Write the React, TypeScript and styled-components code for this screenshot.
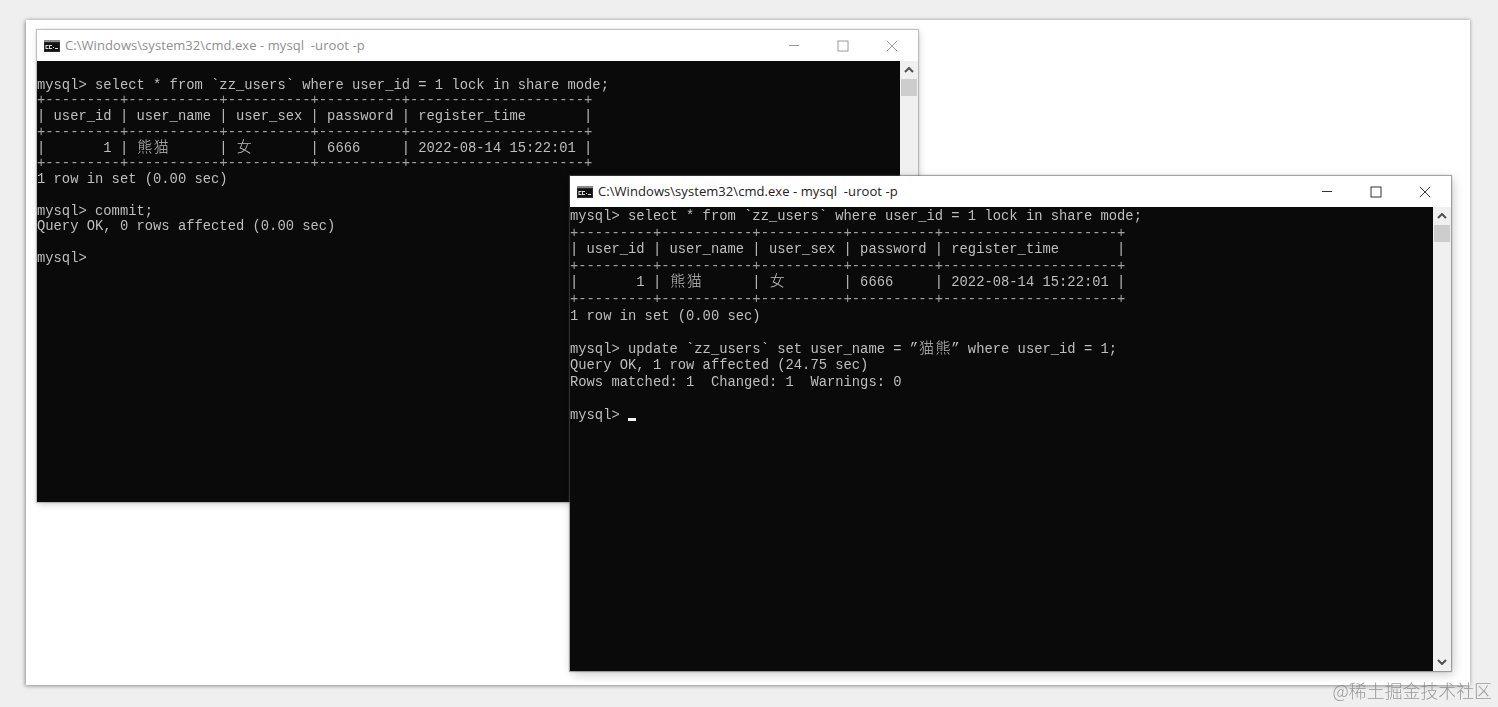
import React from "react";
import styled, { createGlobalStyle } from "styled-components";

const Global = createGlobalStyle`
  html, body { margin: 0; padding: 0; background: #efefef; }
  #root { width: 1498px; height: 707px; overflow: hidden; }
`;

const Page = styled.div`
  position: relative;
  width: 1498px;
  height: 707px;
  padding: 20px 28px 22px 26px;
  box-sizing: border-box;
  background: #efefef;
  overflow: hidden;
`;

const Canvas = styled.div`
  position: relative;
  height: 100%;
  background: #fff;
  box-shadow: -1px 1px 4px rgba(0, 0, 0, 0.4), 1px -1px 3px rgba(0, 0, 0, 0.12);
`;

const Win = styled.section<{ $left: number; $top: number; $w: number; $h: number; $active?: boolean }>`
  position: absolute;
  left: ${(p) => p.$left}px;
  top: ${(p) => p.$top}px;
  width: ${(p) => p.$w}px;
  height: ${(p) => p.$h}px;
  display: flex;
  flex-direction: column;
  background: #fff;
  box-shadow: ${(p) =>
    p.$active
      ? "0 0 1px 1px rgba(90,90,90,.5), 2px 3px 10px rgba(0,0,0,.22)"
      : "0 0 1px 1px rgba(120,120,120,.4), 1px 2px 7px rgba(0,0,0,.2)"};
`;

const TitleBar = styled.header<{ $active?: boolean }>`
  flex: 0 0 31px;
  display: flex;
  align-items: center;
  padding-left: 7px;
  color: ${(p) => (p.$active ? "#222" : "#8f8f8f")};
  font: 13px/1 "Open Sans", "Noto Sans", sans-serif;
  letter-spacing: 0.06px;
  white-space: pre;
`;

const TitleText = styled.span`
  margin-left: 5px;
  flex: 1;
`;

const Controls = styled.div`
  display: flex;
  align-items: center;
  gap: 37px;
  padding-right: 20px;
  line-height: 0;
`;

const Body = styled.div`
  flex: 1;
  min-height: 0;
  display: flex;
`;

const Terminal = styled.div<{ $lh: number; $pt: number }>`
  flex: 1;
  background: #0a0a0a;
  color: #bebebe;
  overflow: hidden;
  box-sizing: border-box;
  padding-top: ${(p) => p.$pt}px;
  font-family: "Liberation Mono", monospace;
  font-size: 13.82px;
  line-height: ${(p) => p.$lh}px;
  white-space: pre;
  filter: blur(0.4px);
`;

const Line = styled.div`
  height: 1lh;
`;

const Rule = styled(Line)`
  color: #a0a0a0;
`;

const Wide = styled.span`
  display: inline-block;
  width: 16.58px;
  text-align: center;
  font-family: "Noto Sans CJK SC", sans-serif;
  font-size: 15px;
  font-weight: 300;
  line-height: 0;
`;

const Cursor = styled.span`
  display: inline-block;
  width: 8px;
  height: 3px;
  background: #f2f2f2;
  vertical-align: -2px;
`;

const Scrollbar = styled.aside`
  flex: 0 0 18px;
  display: flex;
  flex-direction: column;
  background: #f0f0f0;
`;

const Arrow = styled.div`
  flex: 0 0 18px;
  display: flex;
  align-items: center;
  justify-content: center;
`;

const Thumb = styled.div`
  flex: 0 0 17px;
  margin: 0 1px;
  background: #cdcdcd;
`;

const Track = styled.div`
  flex: 1;
`;

const Watermark = styled.div`
  position: absolute;
  right: 6px;
  bottom: 6px;
  color: rgba(120, 120, 120, 0.72);
  font: 300 17.9px/1.2 "Noto Sans CJK SC", sans-serif;
  filter: blur(0.3px);
`;

const ConsoleIcon = () => (
  <svg width="16" height="12" viewBox="0 0 16 12">
    <rect width="16" height="12" fill="#2b2b2b" />
    <rect y="0" width="16" height="2" fill="#8a8a8a" />
    <rect x="1" y="3" width="14" height="8" fill="#111" />
    <path d="M2.5 5h2v1h-2v2h2v1h-3v-4zM6 5h2v1H6v2h2v1H5V5zM9 7h1v1H9zM11 8h3v1h-3z" fill="#ddd" />
  </svg>
);

const WindowButtons = ({ c }: { c: string }) => (
  <Controls>
    <svg width="12" height="12" viewBox="0 0 12 12"><path d="M1 5.5h10" stroke={c} fill="none" /></svg>
    <svg width="12" height="12" viewBox="0 0 12 12"><rect x="1" y="1" width="10" height="10" stroke={c} fill="none" /></svg>
    <svg width="12" height="12" viewBox="0 0 12 12"><path d="M.8.8l10.4 10.4M11.2.8L.8 11.2" stroke={c} fill="none" /></svg>
  </Controls>
);

const Chevron = ({ down }: { down?: boolean }) => (
  <svg width="10" height="6" viewBox="0 0 10 6">
    <path d={down ? "M1 1l4 4 4-4" : "M1 5l4-4 4 4"} stroke="#505050" strokeWidth="2" fill="none" />
  </svg>
);

const RULE = "+---------+-----------+----------+----------+---------------------+";

const TableBlock = () => (
  <>
    <Rule>{RULE}</Rule>
    <Line>{"| user_id | user_name | user_sex | password | register_time       |"}</Line>
    <Rule>{RULE}</Rule>
    <Line>
      {"|       1 | "}
      <Wide>熊</Wide>
      <Wide>猫</Wide>
      {"      | "}
      <Wide>女</Wide>
      {"       | 6666     | 2022-08-14 15:22:01 |"}
    </Line>
    <Rule>{RULE}</Rule>
  </>
);

const SELECT = "mysql> select * from `zz_users` where user_id = 1 lock in share mode;";

const App = () => (
  <>
    <Global />
    <Page>
      <Canvas>
        <Win $left={11} $top={10} $w={881} $h={472}>
          <TitleBar>
            <ConsoleIcon />
            <TitleText>{"C:\\Windows\\system32\\cmd.exe - mysql  -uroot -p"}</TitleText>
            <WindowButtons c="#9a9a9a" />
          </TitleBar>
          <Body>
            <Terminal $lh={15.75} $pt={16.6}>
              <Line>{SELECT}</Line>
              <TableBlock />
              <Line>1 row in set (0.00 sec)</Line>
              <Line> </Line>
              <Line>mysql&gt; commit;</Line>
              <Line>Query OK, 0 rows affected (0.00 sec)</Line>
              <Line> </Line>
              <Line>mysql&gt;</Line>
            </Terminal>
            <Scrollbar>
              <Arrow><Chevron /></Arrow>
              <Thumb />
              <Track />
            </Scrollbar>
          </Body>
        </Win>

        <Win $left={544} $top={156} $w={881} $h={495} $active>
          <TitleBar $active>
            <ConsoleIcon />
            <TitleText>{"C:\\Windows\\system32\\cmd.exe - mysql  -uroot -p"}</TitleText>
            <WindowButtons c="#333" />
          </TitleBar>
          <Body>
            <Terminal $lh={16.55} $pt={1.3}>
              <Line>{SELECT}</Line>
              <TableBlock />
              <Line>1 row in set (0.00 sec)</Line>
              <Line> </Line>
              <Line>
                {"mysql> update `zz_users` set user_name = \u201D"}
                <Wide>猫</Wide>
                <Wide>熊</Wide>
                {"\u201D where user_id = 1;"}
              </Line>
              <Line>Query OK, 1 row affected (24.75 sec)</Line>
              <Line>Rows matched: 1  Changed: 1  Warnings: 0</Line>
              <Line> </Line>
              <Line>
                {"mysql> "}
                <Cursor />
              </Line>
            </Terminal>
            <Scrollbar>
              <Arrow><Chevron /></Arrow>
              <Thumb />
              <Track />
              <Arrow><Chevron down /></Arrow>
            </Scrollbar>
          </Body>
        </Win>
      </Canvas>
      <Watermark>@稀土掘金技术社区</Watermark>
    </Page>
  </>
);

export default App;
